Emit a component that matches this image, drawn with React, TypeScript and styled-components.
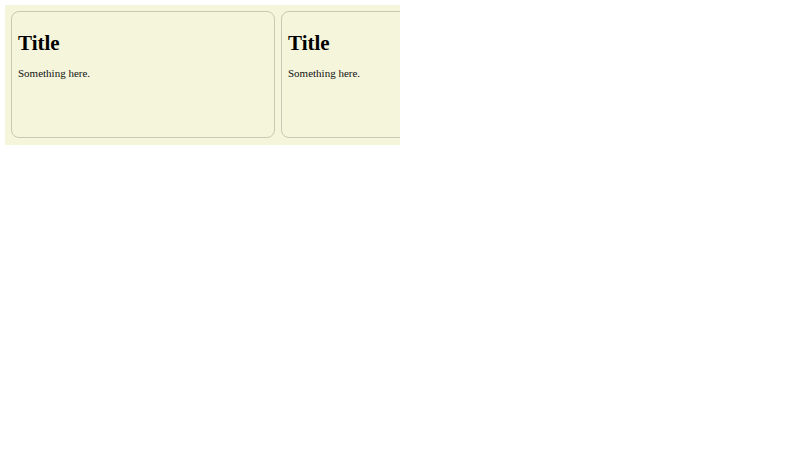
import React from "react";
import styled, { createGlobalStyle } from "styled-components";

const Global = createGlobalStyle`
  html, body { margin: 0; padding: 0; background: #ffffff; }
  body { font-family: "Liberation Serif", "Times New Roman", serif; color: #000; }
`;

const Strip = styled.div`
  margin: 5px;
  width: 395px;
  height: 140px;
  box-sizing: border-box;
  padding: 6px;
  background: #f5f5dc;
  display: flex;
  gap: 6px;
  overflow: hidden;
`;

const Card = styled.div`
  flex: 0 0 264px;
  height: 127px;
  box-sizing: border-box;
  border: 1px solid #c8c8b4;
  border-radius: 8px;
  padding: 0 6px;
`;

const Title = styled.h2`
  margin: 19px 0 0;
  font-size: 21px;
  line-height: 24px;
  font-weight: bold;
`;

const Body = styled.p`
  margin: 11px 0 0;
  font-size: 11px;
  line-height: 14px;
  color: #111;
`;

export default function App() {
  return (
    <>
      <Global />
      <Strip>
        {[0, 1].map((i) => (
          <Card key={i}>
            <Title>Title</Title>
            <Body>Something here.</Body>
          </Card>
        ))}
      </Strip>
    </>
  );
}
